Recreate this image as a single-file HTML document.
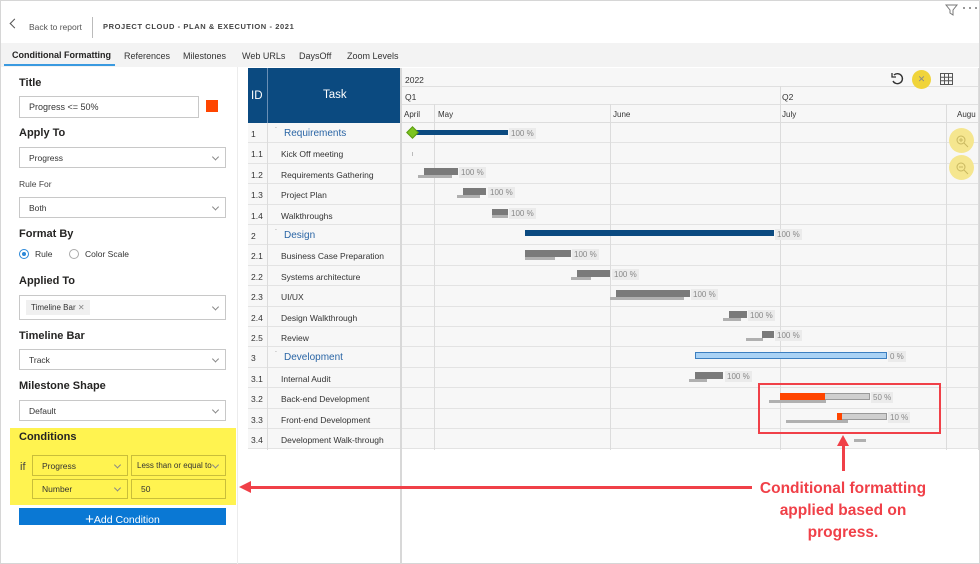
<!DOCTYPE html>
<html><head><meta charset="utf-8"><style>
*{box-sizing:border-box;margin:0;padding:0}
body{width:980px;height:564px;position:relative;overflow:hidden;background:#fff;font-family:"Liberation Sans",sans-serif;color:#333}
.a{position:absolute}
.lbl{position:absolute;font-size:11px;font-weight:bold;color:#252423}
.sel{position:absolute;border:1px solid #c8c8c8;background:#fff;font-size:8.5px;color:#333;padding-left:9px;display:flex;align-items:center;white-space:nowrap;overflow:hidden}
.sel:after{content:"";position:absolute;right:7px;top:50%;width:4px;height:4px;border-right:1px solid #888;border-bottom:1px solid #888;transform:translateY(-70%) rotate(45deg)}
.sel.noarr:after{display:none}
.row{position:absolute;left:248px;width:730px;height:20.4px;border-bottom:1px solid #e3e3e3;background:#f7f7f7;font-size:8.5px}
.row .id{position:absolute;left:3px;top:6px}
.row .t{position:absolute;left:33px;top:6px}
.row .c{position:absolute;left:27px;top:3px;font-size:8px;color:#666}
.row .g{position:absolute;left:36px;top:5px;font-size:10px;color:#2a65a5;white-space:nowrap}
.bar{position:absolute;height:7px;background:#7a7a7a}
.base{position:absolute;height:3px;background:#b0b0b0}
.pct{position:absolute;font-size:8px;color:#888;background:#ebebeb;padding:1px 2px;line-height:9px}
.vl{position:absolute;width:1px;background:#dcdcdc}
</style></head><body>
<div class="a" style="left:0;top:0;width:980px;height:564px;border:1px solid #d6d6d6"></div>
<div class="a" style="left:11px;top:20px;width:7px;height:7px;border-left:1.5px solid #555;border-bottom:1.5px solid #555;transform:rotate(45deg)"></div>
<div class="a" style="left:29px;top:22px;font-size:8.5px;color:#555">Back to report</div>
<div class="a" style="left:92px;top:17px;width:1px;height:21px;background:#bbb"></div>
<div class="a" style="left:103px;top:22px;font-size:7.5px;font-weight:bold;color:#444;letter-spacing:.6px">PROJECT CLOUD - PLAN &amp; EXECUTION - 2021</div>
<svg class="a" style="left:945px;top:4px" width="14" height="12"><path d="M1 1H12L8 6V11L5 9V6Z" fill="none" stroke="#777" stroke-width="1"/></svg>
<svg class="a" style="left:962px;top:6px" width="16" height="4"><circle cx="2" cy="2" r="1" fill="#777"/><circle cx="8" cy="2" r="1" fill="#777"/><circle cx="14" cy="2" r="1" fill="#777"/></svg>
<div class="a" style="left:1px;top:43px;width:978px;height:24px;background:#f3f3f3"></div>
<div class="a" style="left:12px;top:50px;font-size:9px;font-weight:bold;color:#252423">Conditional Formatting</div>
<div class="a" style="left:4px;top:64px;width:111px;height:2px;background:#3a9ae0"></div>
<div class="a" style="left:124px;top:51px;font-size:9px;color:#333">References</div>
<div class="a" style="left:183px;top:51px;font-size:9px;color:#333">Milestones</div>
<div class="a" style="left:242px;top:51px;font-size:9px;color:#333">Web URLs</div>
<div class="a" style="left:299px;top:51px;font-size:9px;color:#333">DaysOff</div>
<div class="a" style="left:347px;top:51px;font-size:9px;color:#333">Zoom Levels</div>
<div class="lbl" style="left:19px;top:77px">Title</div>
<div class="sel noarr" style="left:19px;top:96px;width:180px;height:22px;font-size:9px">Progress &lt;= 50%</div>
<div class="a" style="left:206px;top:100px;width:12px;height:12px;background:#ff4500"></div>
<div class="lbl" style="left:19px;top:127px">Apply To</div>
<div class="sel" style="left:19px;top:147px;width:207px;height:21px">Progress</div>
<div class="a" style="left:19px;top:179px;font-size:8.5px;color:#444">Rule For</div>
<div class="sel" style="left:19px;top:197px;width:207px;height:21px">Both</div>
<div class="lbl" style="left:19px;top:228px">Format By</div>
<div class="a" style="left:19px;top:249px;width:10px;height:10px;border:1px solid #2b88d8;border-radius:50%"><div style="margin:2px;width:4px;height:4px;border-radius:50%;background:#2b88d8"></div></div>
<div class="a" style="left:35px;top:249px;font-size:8.5px">Rule</div>
<div class="a" style="left:69px;top:249px;width:10px;height:10px;border:1px solid #aaa;border-radius:50%"></div>
<div class="a" style="left:85px;top:249px;font-size:8.5px">Color Scale</div>
<div class="lbl" style="left:19px;top:275px">Applied To</div>
<div class="sel" style="left:19px;top:295px;width:207px;height:25px;padding-left:6px"><span style="background:#f0f0f0;padding:3px 5px;font-size:8px">Timeline Bar <span style="color:#888">✕</span></span></div>
<div class="lbl" style="left:19px;top:330px">Timeline Bar</div>
<div class="sel" style="left:19px;top:349px;width:207px;height:21px">Track</div>
<div class="lbl" style="left:19px;top:380px">Milestone Shape</div>
<div class="sel" style="left:19px;top:400px;width:207px;height:21px">Default</div>
<div class="a" style="left:10px;top:428px;width:226px;height:77px;background:#fff350"></div>
<div class="lbl" style="left:19px;top:431px">Conditions</div>
<div class="a" style="left:20px;top:461px;font-size:11px;color:#444">if</div>
<div class="sel" style="left:32px;top:455px;width:96px;height:21px;background:#fff350;border-color:#c9be3a">Progress</div>
<div class="sel" style="left:131px;top:455px;width:95px;height:21px;background:#fff350;border-color:#c9be3a;padding-left:5px;font-size:8px">Less than or equal to</div>
<div class="sel" style="left:32px;top:479px;width:96px;height:20px;background:#fff350;border-color:#c9be3a">Number</div>
<div class="sel noarr" style="left:131px;top:479px;width:95px;height:20px;background:#fff350;border-color:#c9be3a">50</div>
<div class="a" style="left:19px;top:508px;width:207px;height:17px;background:#0a78d4;color:#fff;font-size:10.5px;text-align:center;line-height:24px;overflow:hidden"><span style="font-size:15px;vertical-align:-1px">+</span>Add Condition</div>
<div class="a" style="left:237px;top:67px;width:1px;height:497px;background:#ececec"></div>
<div class="a" style="left:248px;top:68px;width:730px;height:55px;background:#f7f7f7;border-bottom:1px solid #ddd"></div>
<div class="a" style="left:248px;top:68px;width:153px;height:55px;background:#0b4a80"></div>
<div class="a" style="left:267px;top:68px;width:1px;height:55px;background:#6a8fb5"></div>
<div class="a" style="left:251px;top:90px;font-size:11.5px;color:#fff">ID</div>
<div class="a" style="left:323px;top:89px;font-size:11.5px;color:#fff">Task</div>
<div class="a" style="left:401px;top:86px;width:577px;height:1px;background:#e0e0e0"></div>
<div class="a" style="left:401px;top:104px;width:577px;height:1px;background:#e0e0e0"></div>
<div class="a" style="left:405px;top:75px;font-size:8.5px">2022</div>
<div class="a" style="left:405px;top:92px;font-size:8.5px">Q1</div>
<div class="a" style="left:782px;top:92px;font-size:8.5px">Q2</div>
<div class="a" style="left:404px;top:110px;font-size:8px">April</div>
<div class="a" style="left:438px;top:110px;font-size:8px">May</div>
<div class="a" style="left:613px;top:110px;font-size:8px">June</div>
<div class="a" style="left:782px;top:110px;font-size:8px">July</div>
<div class="a" style="left:957px;top:110px;font-size:8px">Augu</div>
<svg class="a" style="left:890px;top:72px" width="14" height="14"><path d="M4 3A5 5 0 1 1 3 9" fill="none" stroke="#333" stroke-width="1.4"/><path d="M2 1V5H6" fill="none" stroke="#333" stroke-width="1.3"/></svg>
<div class="a" style="left:912px;top:70px;width:19px;height:19px;border-radius:50%;background:#f0d43a;color:#888;font-size:9px;text-align:center;line-height:19px">✕</div>
<svg class="a" style="left:940px;top:73px" width="13" height="12"><path d="M0.5 .5H12.5V11.5H0.5ZM4.5 .5V11.5M8.5 .5V11.5M.5 4.2H12.5M.5 7.8H12.5" fill="none" stroke="#555" stroke-width="1"/></svg>
<div class="row" style="top:123px"><span class="id">1</span><span class="c">˙</span><span class="g">Requirements</span></div>
<div class="row" style="top:143.4px"><span class="id">1.1</span><span class="t">Kick Off meeting</span></div>
<div class="row" style="top:163.8px"><span class="id">1.2</span><span class="t">Requirements Gathering</span></div>
<div class="row" style="top:184.2px"><span class="id">1.3</span><span class="t">Project Plan</span></div>
<div class="row" style="top:204.6px"><span class="id">1.4</span><span class="t">Walkthroughs</span></div>
<div class="row" style="top:225px"><span class="id">2</span><span class="c">˙</span><span class="g">Design</span></div>
<div class="row" style="top:245.4px"><span class="id">2.1</span><span class="t">Business Case Preparation</span></div>
<div class="row" style="top:265.8px"><span class="id">2.2</span><span class="t">Systems architecture</span></div>
<div class="row" style="top:286.2px"><span class="id">2.3</span><span class="t">UI/UX</span></div>
<div class="row" style="top:306.6px"><span class="id">2.4</span><span class="t">Design Walkthrough</span></div>
<div class="row" style="top:327px"><span class="id">2.5</span><span class="t">Review</span></div>
<div class="row" style="top:347.4px"><span class="id">3</span><span class="c">˙</span><span class="g">Development</span></div>
<div class="row" style="top:367.8px"><span class="id">3.1</span><span class="t">Internal Audit</span></div>
<div class="row" style="top:388.2px"><span class="id">3.2</span><span class="t">Back-end Development</span></div>
<div class="row" style="top:408.6px"><span class="id">3.3</span><span class="t">Front-end Development</span></div>
<div class="row" style="top:429px"><span class="id">3.4</span><span class="t">Development Walk-through</span></div>
<div class="vl" style="left:267px;top:123px;height:327px"></div>
<div class="a" style="left:400px;top:68px;width:2px;height:496px;background:#d8d8d8"></div>
<div class="vl" style="left:434px;top:104px;height:346px"></div>
<div class="vl" style="left:610px;top:104px;height:346px"></div>
<div class="vl" style="left:780px;top:86px;height:364px"></div>
<div class="vl" style="left:946px;top:104px;height:346px"></div>
<div class="vl" style="left:978px;top:68px;height:382px"></div>
<div class="a" style="left:412px;top:130px;width:96px;height:5px;background:#0b4a80"></div>
<div class="a" style="left:408px;top:128px;width:9px;height:9px;background:#7cc520;border:1px solid #5a9a10;transform:rotate(45deg)"></div>
<div class="pct" style="left:509px;top:128px">100 %</div>
<div class="a" style="left:412px;top:152px;width:1px;height:4px;background:#bbb"></div>
<div class="bar" style="left:424px;top:168px;width:34px"></div><div class="base" style="left:418px;top:175px;width:34px"></div><div class="pct" style="left:459px;top:167px">100 %</div>
<div class="bar" style="left:463px;top:188px;width:23px"></div><div class="base" style="left:457px;top:195px;width:23px"></div><div class="pct" style="left:488px;top:187px">100 %</div>
<div class="bar" style="left:492px;top:209px;width:16px"></div><div class="base" style="left:492px;top:215px;width:16px"></div><div class="pct" style="left:509px;top:208px">100 %</div>
<div class="a" style="left:525px;top:230px;width:249px;height:6px;background:#0b4a80"></div><div class="pct" style="left:775px;top:229px">100 %</div>
<div class="bar" style="left:525px;top:250px;width:46px"></div><div class="base" style="left:525px;top:257px;width:30px"></div><div class="pct" style="left:572px;top:249px">100 %</div>
<div class="bar" style="left:577px;top:270px;width:33px"></div><div class="base" style="left:571px;top:277px;width:20px"></div><div class="pct" style="left:612px;top:269px">100 %</div>
<div class="bar" style="left:616px;top:290px;width:74px"></div><div class="base" style="left:610px;top:297px;width:74px"></div><div class="pct" style="left:691px;top:289px">100 %</div>
<div class="bar" style="left:729px;top:311px;width:18px"></div><div class="base" style="left:723px;top:318px;width:18px"></div><div class="pct" style="left:748px;top:310px">100 %</div>
<div class="bar" style="left:762px;top:331px;width:12px"></div><div class="base" style="left:746px;top:338px;width:17px"></div><div class="pct" style="left:775px;top:330px">100 %</div>
<div class="a" style="left:695px;top:352px;width:192px;height:7px;background:#a9d2f5;border:1px solid #3c7fc0"></div><div class="pct" style="left:888px;top:351px">0 %</div>
<div class="bar" style="left:695px;top:372px;width:28px"></div><div class="base" style="left:689px;top:379px;width:18px"></div><div class="pct" style="left:725px;top:371px">100 %</div>
<div class="a" style="left:780px;top:393px;width:90px;height:7px;background:#cfcfcf;border:1px solid #999"></div><div class="a" style="left:780px;top:393px;width:45px;height:7px;background:#ff4500"></div><div class="base" style="left:769px;top:400px;width:57px"></div><div class="pct" style="left:871px;top:392px">50 %</div>
<div class="a" style="left:837px;top:413px;width:50px;height:7px;background:#cfcfcf;border:1px solid #999"></div><div class="a" style="left:837px;top:413px;width:5px;height:7px;background:#ff4500"></div><div class="base" style="left:786px;top:420px;width:62px"></div><div class="pct" style="left:888px;top:412px">10 %</div>
<div class="base" style="left:854px;top:439px;width:12px;height:3px"></div>
<div class="a" style="left:949px;top:128px;width:25px;height:25px;border-radius:50%;background:#f5e68f"></div>
<div class="a" style="left:949px;top:155px;width:25px;height:25px;border-radius:50%;background:#f5e68f"></div>
<svg class="a" style="left:955px;top:134px" width="14" height="14"><circle cx="6" cy="6" r="4" fill="none" stroke="#c9b860" stroke-width="1"/><path d="M9 9L13 13M4 6H8M6 4V8" stroke="#c9b860" stroke-width="1"/></svg>
<svg class="a" style="left:955px;top:161px" width="14" height="14"><circle cx="6" cy="6" r="4" fill="none" stroke="#c9b860" stroke-width="1"/><path d="M9 9L13 13M4 6H8" stroke="#c9b860" stroke-width="1"/></svg>
<div class="a" style="left:758px;top:383px;width:183px;height:51px;border:2px solid #f04048"></div>
<div class="a" style="left:842px;top:444px;width:3px;height:27px;background:#f04048"></div>
<div class="a" style="left:837px;top:435px;width:0;height:0;border-left:6.5px solid transparent;border-right:6.5px solid transparent;border-bottom:11px solid #f04048"></div>
<div class="a" style="left:250px;top:486px;width:502px;height:3px;background:#f04048"></div>
<div class="a" style="left:239px;top:481px;width:0;height:0;border-top:6.5px solid transparent;border-bottom:6.5px solid transparent;border-right:12px solid #f04048"></div>
<div class="a" style="left:753px;top:478px;width:180px;text-align:center;font-size:15.5px;font-weight:bold;color:#f04048;line-height:22px">Conditional formatting<br>applied based on<br>progress.</div>
</body></html>
